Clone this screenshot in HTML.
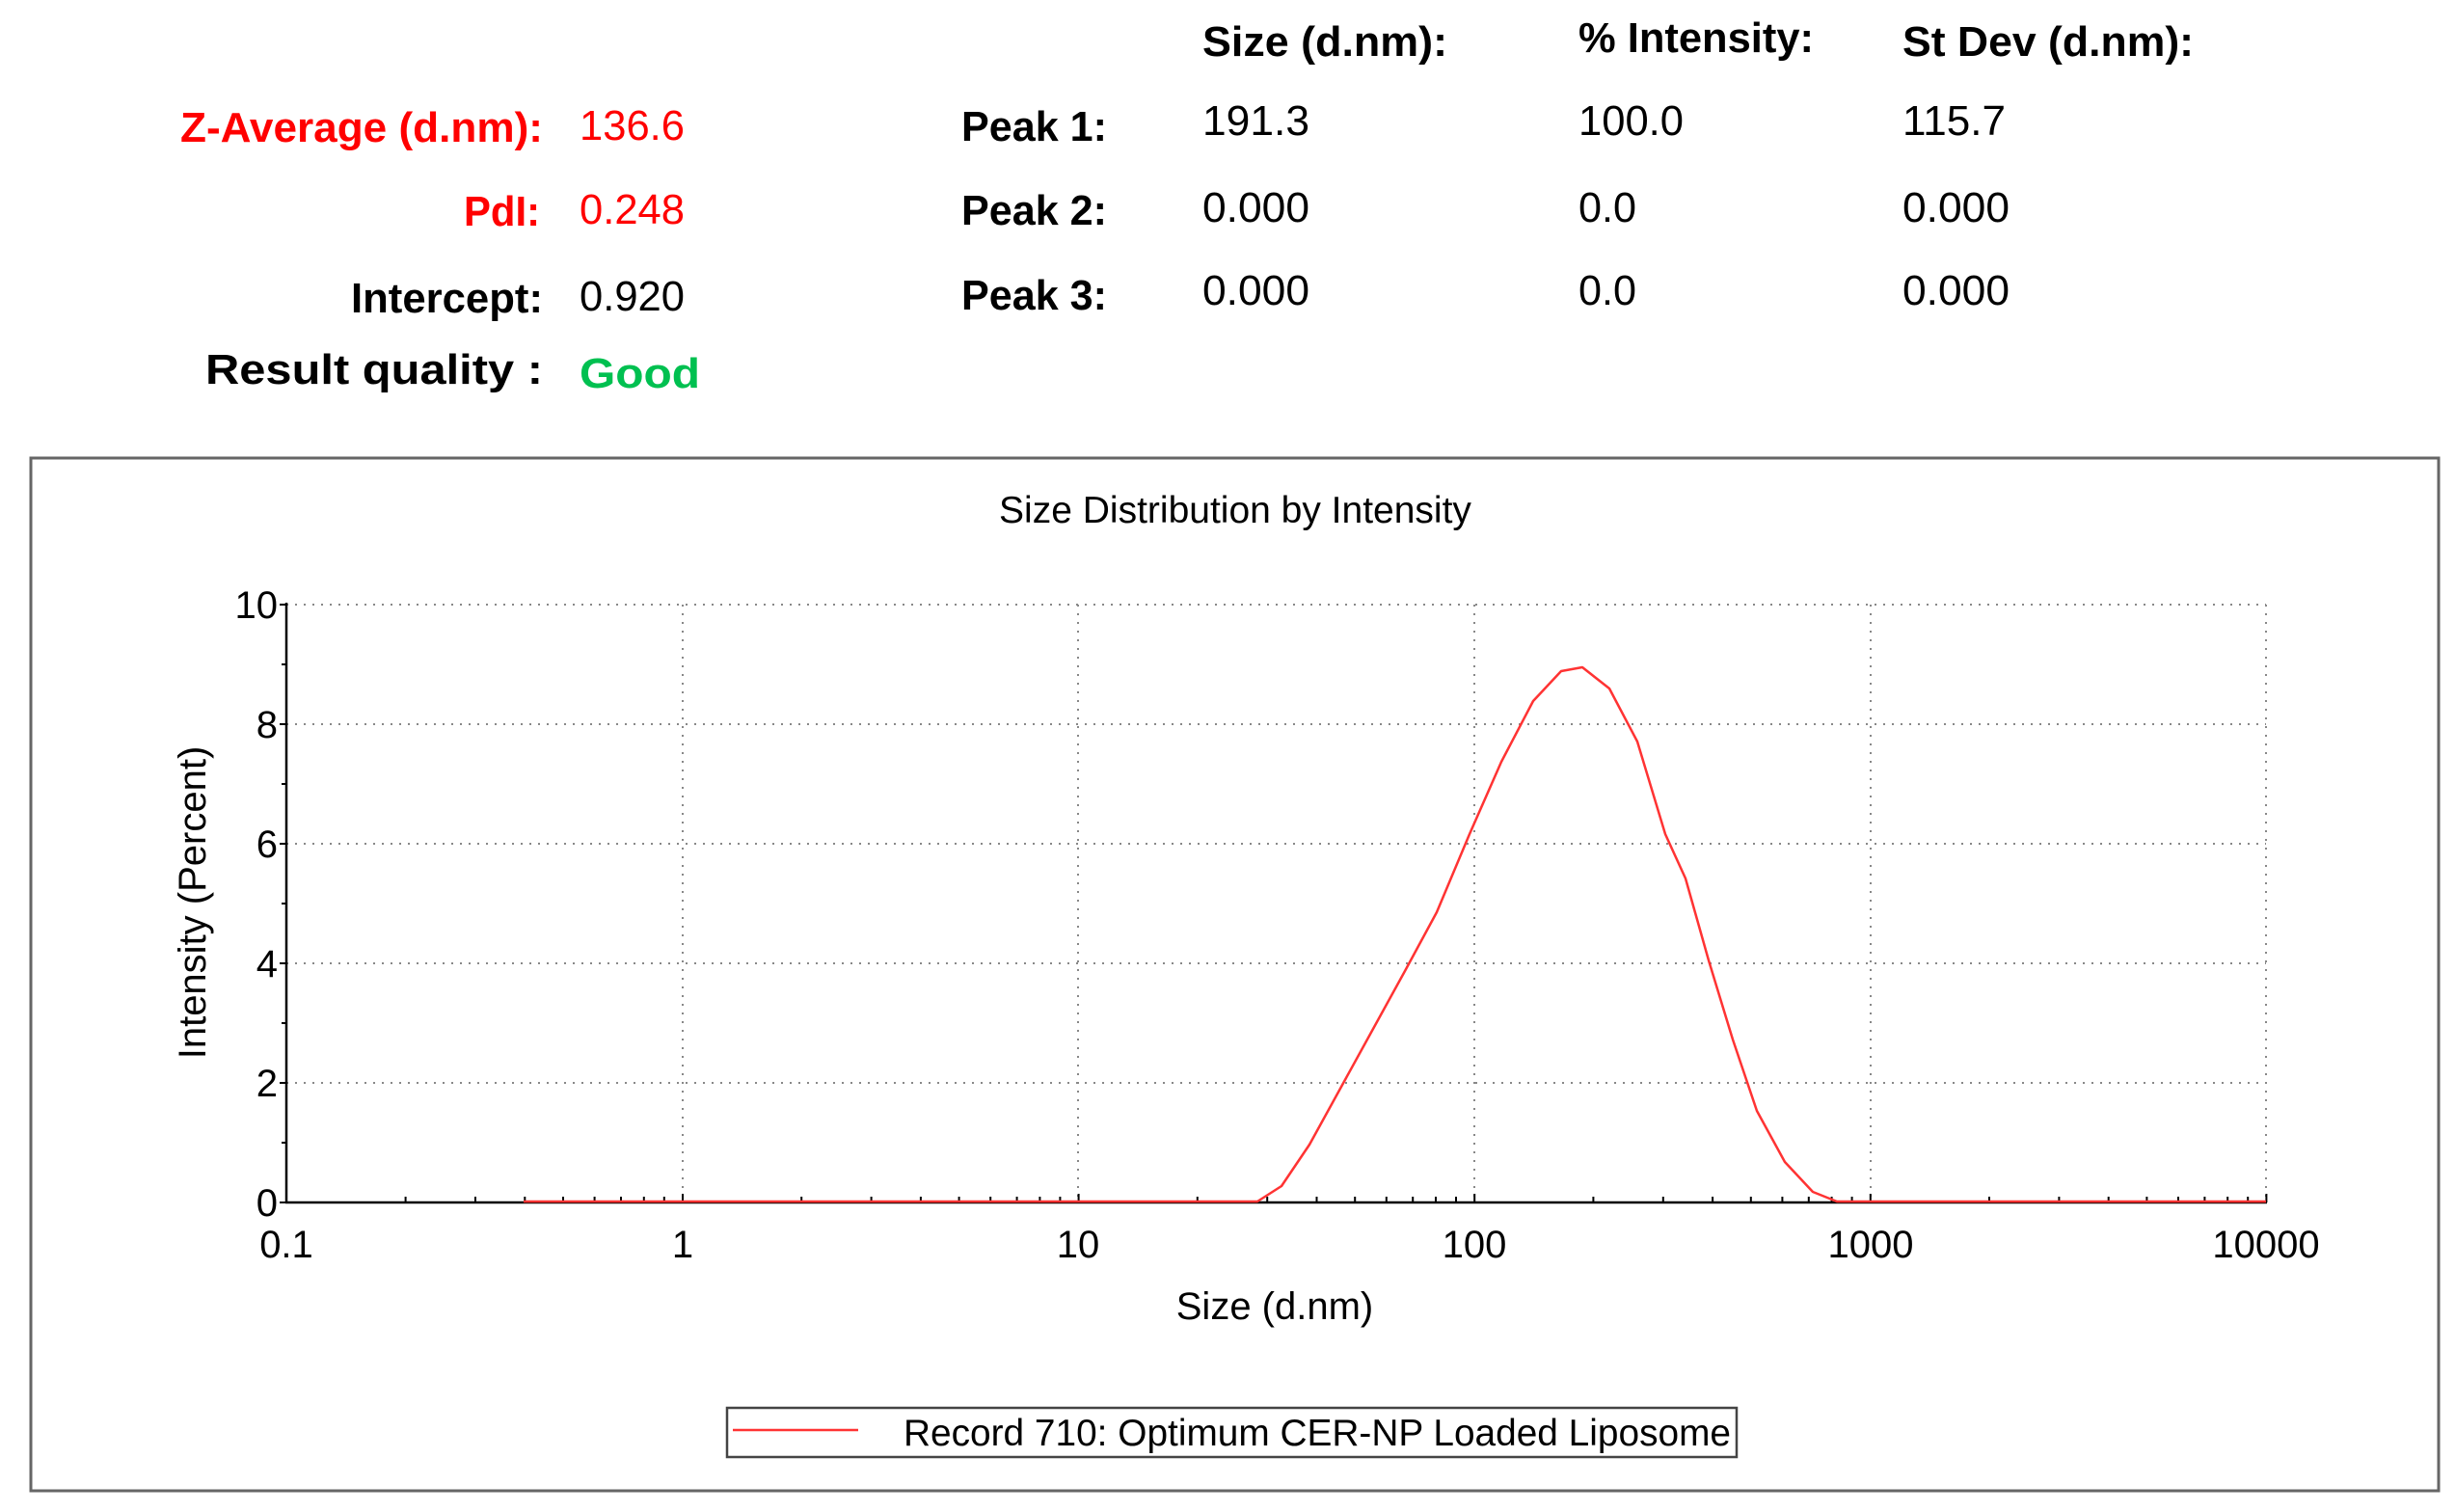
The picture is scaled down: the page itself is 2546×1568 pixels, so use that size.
<!DOCTYPE html>
<html><head><meta charset="utf-8"><style>
html,body{margin:0;padding:0;background:#fff;}
svg{display:block;font-family:"Liberation Sans",Arial,sans-serif;}
</style></head><body>
<svg width="2546" height="1568" viewBox="0 0 2546 1568" xmlns="http://www.w3.org/2000/svg">
<rect width="2546" height="1568" fill="#fff"/>
<!-- top stats -->
<g font-size="44" transform="translate(0,-1)">
<text x="187" y="148" font-weight="bold" fill="#f00" textLength="376" lengthAdjust="spacingAndGlyphs">Z-Average (d.nm):</text>
<text x="481" y="235" font-weight="bold" fill="#f00" textLength="79" lengthAdjust="spacingAndGlyphs">PdI:</text>
<text x="364" y="325" font-weight="bold" fill="#000" textLength="199" lengthAdjust="spacingAndGlyphs">Intercept:</text>
<text x="213" y="399" font-weight="bold" fill="#000" textLength="350" lengthAdjust="spacingAndGlyphs">Result quality :</text>
<text x="601" y="146" fill="#f00" textLength="109" lengthAdjust="spacingAndGlyphs">136.6</text>
<text x="601" y="233" fill="#f00" textLength="109" lengthAdjust="spacingAndGlyphs">0.248</text>
<text x="601" y="323" fill="#000" textLength="109" lengthAdjust="spacingAndGlyphs">0.920</text>
<text x="601" y="403" font-weight="bold" fill="#00c050" textLength="125" lengthAdjust="spacingAndGlyphs">Good</text>

<text x="1247" y="59" font-weight="bold" textLength="254" lengthAdjust="spacingAndGlyphs">Size (d.nm):</text>
<text x="1637" y="55" font-weight="bold" textLength="244" lengthAdjust="spacingAndGlyphs">% Intensity:</text>
<text x="1973" y="59" font-weight="bold" textLength="302" lengthAdjust="spacingAndGlyphs">St Dev (d.nm):</text>

<text x="997" y="147" font-weight="bold" textLength="151" lengthAdjust="spacingAndGlyphs">Peak 1:</text>
<text x="997" y="234" font-weight="bold" textLength="151" lengthAdjust="spacingAndGlyphs">Peak 2:</text>
<text x="997" y="322" font-weight="bold" textLength="151" lengthAdjust="spacingAndGlyphs">Peak 3:</text>

<text x="1247" y="141" textLength="111" lengthAdjust="spacingAndGlyphs">191.3</text>
<text x="1637" y="141" textLength="109" lengthAdjust="spacingAndGlyphs">100.0</text>
<text x="1973" y="141" textLength="107" lengthAdjust="spacingAndGlyphs">115.7</text>
<text x="1247" y="231" textLength="111" lengthAdjust="spacingAndGlyphs">0.000</text>
<text x="1637" y="231" textLength="60" lengthAdjust="spacingAndGlyphs">0.0</text>
<text x="1973" y="231" textLength="111" lengthAdjust="spacingAndGlyphs">0.000</text>
<text x="1247" y="317" textLength="111" lengthAdjust="spacingAndGlyphs">0.000</text>
<text x="1637" y="317" textLength="60" lengthAdjust="spacingAndGlyphs">0.0</text>
<text x="1973" y="317" textLength="111" lengthAdjust="spacingAndGlyphs">0.000</text>
</g>

<!-- chart frame -->
<rect x="32" y="475" width="2497" height="1071" fill="#fff" stroke="#666" stroke-width="3"/>
<g transform="translate(0,-3)">
<text x="1281" y="545" font-size="39" text-anchor="middle">Size Distribution by Intensity</text>

<!-- grid -->
<g stroke="#888" stroke-width="2" stroke-dasharray="2,7" fill="none">
<line x1="297" y1="630" x2="2350" y2="630"/>
<line x1="297" y1="754" x2="2350" y2="754"/>
<line x1="297" y1="878" x2="2350" y2="878"/>
<line x1="297" y1="1002" x2="2350" y2="1002"/>
<line x1="297" y1="1126" x2="2350" y2="1126"/>
<line x1="708" y1="630" x2="708" y2="1250"/>
<line x1="1118" y1="630" x2="1118" y2="1250"/>
<line x1="1529" y1="630" x2="1529" y2="1250"/>
<line x1="1940" y1="630" x2="1940" y2="1250"/>
<line x1="2350" y1="630" x2="2350" y2="1250"/>
</g>
<!-- axes -->
<g stroke="#000" stroke-width="2.5">
<line x1="297" y1="628" x2="297" y2="1251"/>
<line x1="296" y1="1250" x2="2351" y2="1250"/>
</g>
<g stroke="#000" stroke-width="2">
<line x1="290" y1="630" x2="297" y2="630"/><line x1="292" y1="692" x2="297" y2="692"/>
<line x1="290" y1="754" x2="297" y2="754"/><line x1="292" y1="816" x2="297" y2="816"/>
<line x1="290" y1="878" x2="297" y2="878"/><line x1="292" y1="940" x2="297" y2="940"/>
<line x1="290" y1="1002" x2="297" y2="1002"/><line x1="292" y1="1064" x2="297" y2="1064"/>
<line x1="290" y1="1126" x2="297" y2="1126"/><line x1="292" y1="1188" x2="297" y2="1188"/>
<line x1="290" y1="1250" x2="297" y2="1250"/>
</g>
<g stroke="#000" stroke-width="2">
<path d="M420.6 1250v-6M493 1250v-6M544.3 1250v-6M584 1250v-6M616.6 1250v-6M644 1250v-6M667.8 1250v-6M688.8 1250v-6M708 1250v-9"/>
<path transform="translate(410.6 0)" d="M420.6 1250v-6M493 1250v-6M544.3 1250v-6M584 1250v-6M616.6 1250v-6M644 1250v-6M667.8 1250v-6M688.8 1250v-6M708 1250v-9"/>
<path transform="translate(821.2 0)" d="M420.6 1250v-6M493 1250v-6M544.3 1250v-6M584 1250v-6M616.6 1250v-6M644 1250v-6M667.8 1250v-6M688.8 1250v-6M708 1250v-9"/>
<path transform="translate(1231.8 0)" d="M420.6 1250v-6M493 1250v-6M544.3 1250v-6M584 1250v-6M616.6 1250v-6M644 1250v-6M667.8 1250v-6M688.8 1250v-6M708 1250v-9"/>
<path transform="translate(1642.4 0)" d="M420.6 1250v-6M493 1250v-6M544.3 1250v-6M584 1250v-6M616.6 1250v-6M644 1250v-6M667.8 1250v-6M688.8 1250v-6M708 1250v-9"/>
</g>

<!-- data -->
<polyline fill="none" stroke="#f33" stroke-width="2.5" stroke-linejoin="round" points="543,1249 1304,1249 1329,1233 1358,1190 1391,1130 1424,1070 1457,1010 1490,949 1524,868 1557,793 1590,730 1619,699 1641,695 1669,717 1698,772 1727,868 1748,914 1772,999 1797,1081 1822,1155 1851,1208 1880,1239 1905,1249 2350,1249"/>

<!-- tick labels -->
<g font-size="40" text-anchor="end">
<text x="288" y="644">10</text>
<text x="288" y="768">8</text>
<text x="288" y="892">6</text>
<text x="288" y="1016">4</text>
<text x="288" y="1140">2</text>
<text x="288" y="1264">0</text>
</g>
<g font-size="40" text-anchor="middle">
<text x="297" y="1307">0.1</text>
<text x="708" y="1307">1</text>
<text x="1118" y="1307">10</text>
<text x="1529" y="1307">100</text>
<text x="1940" y="1307">1000</text>
<text x="2350" y="1307">10000</text>
<text x="1322" y="1371">Size (d.nm)</text>
<text transform="translate(213 939) rotate(-90)">Intensity (Percent)</text>
</g>
</g>

<!-- legend -->
<rect x="754" y="1460" width="1047" height="51" fill="#fff" stroke="#444" stroke-width="2.5"/>
<line x1="760" y1="1483" x2="890" y2="1483" stroke="#f33" stroke-width="2.5"/>
<text x="937" y="1499" font-size="39" textLength="858" lengthAdjust="spacingAndGlyphs">Record 710: Optimum CER-NP Loaded Liposome</text>
</svg>
</body></html>
